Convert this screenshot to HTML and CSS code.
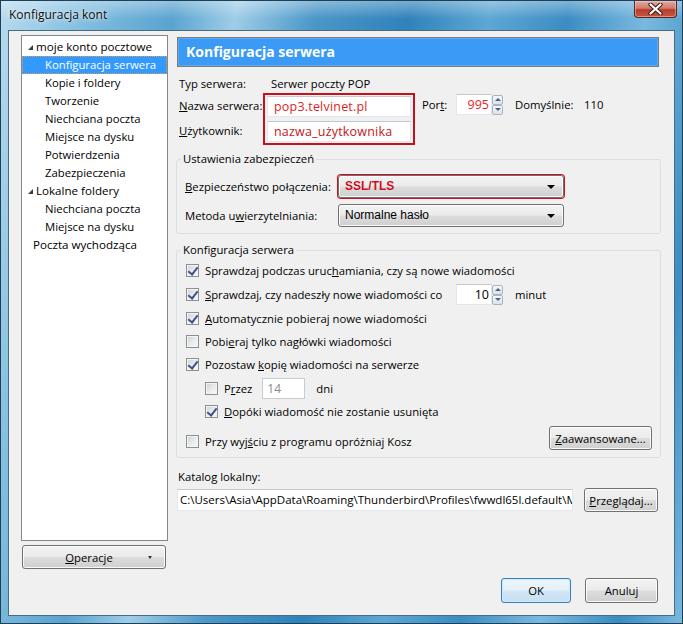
FILE: index.html
```html
<!DOCTYPE html>
<html lang="pl">
<head>
    <meta charset="UTF-8">
    <title>Konfiguracja kont</title>
    <link rel="stylesheet" href="styles.css">
</head>
<body>
    <div class="window">
        <div class="titlebar">
            <span class="title">Konfiguracja kont</span>
            <span class="close">
                <svg width="17" height="12" viewBox="0 0 17 12">
                    <path d="M3.5 1.5 L13.5 10.5 M13.5 1.5 L3.5 10.5" stroke="#3a1a16" stroke-width="4.2" stroke-linecap="round"/>
                    <path d="M3.5 1.5 L13.5 10.5 M13.5 1.5 L3.5 10.5" stroke="#fff" stroke-width="2.2" stroke-linecap="round"/>
                </svg>
            </span>
        </div>

        <div class="client">
            <div class="main">
                <div class="sidebar">
                    <ul class="tree">
                        <li class="parent"><span class="twisty"></span><span>moje konto pocztowe</span></li>
                        <li class="child selected">Konfiguracja serwera</li>
                        <li class="child">Kopie i foldery</li>
                        <li class="child">Tworzenie</li>
                        <li class="child">Niechciana poczta</li>
                        <li class="child">Miejsce na dysku</li>
                        <li class="child">Potwierdzenia</li>
                        <li class="child">Zabezpieczenia</li>
                        <li class="parent"><span class="twisty"></span><span>Lokalne foldery</span></li>
                        <li class="child">Niechciana poczta</li>
                        <li class="child">Miejsce na dysku</li>
                        <li class="parent leaf">Poczta wychodząca</li>
                    </ul>
                    <button class="btn ops"><span><u>O</u>peracje</span><span class="caret"></span></button>
                </div>

                <div class="panel">
                    <div class="panel-head">Konfiguracja serwera</div>

                    <div class="type-row">
                        <span class="lbl">Typ serwera:</span>
                        <span>Serwer poczty POP</span>
                    </div>

                    <div class="server-row">
                        <div class="labels">
                            <span><u>N</u>azwa serwera:</span>
                            <span><u>U</u>żytkownik:</span>
                        </div>
                        <div class="redbox">
                            <div class="textbox red">pop3.telvinet.pl</div>
                            <div class="textbox red dark">nazwa_użytkownika</div>
                        </div>
                        <div class="port">
                            <span class="port-lbl">Por<u>t</u>:</span>
                            <div class="textbox num bright">995</div>
                            <div class="spin"><span class="up"></span><span class="down"></span></div>
                            <span class="default-lbl">Domyślnie:</span>
                            <span>110</span>
                        </div>
                    </div>

                    <fieldset class="group security">
                        <legend>Ustawienia zabezpieczeń</legend>
                        <div class="sec-row">
                            <span class="sec-lbl"><u>B</u>ezpieczeństwo połączenia:</span>
                            <div class="select alert"><span>SSL/TLS</span></div>
                        </div>
                        <div class="sec-row">
                            <span class="sec-lbl">Metoda u<u>w</u>ierzytelniania:</span>
                            <div class="select"><span>Normalne hasło</span></div>
                        </div>
                    </fieldset>

                    <fieldset class="group options">
                        <legend>Konfiguracja serwera</legend>
                        <div class="check-row"><span class="cb on"></span><span>Sprawdzaj podczas uruc<u>h</u>amiania, czy są nowe wiadomości</span></div>
                        <div class="check-row tall">
                            <span class="cb on"></span>
                            <span class="interval-lbl"><u>S</u>prawdzaj, czy nadeszły nowe wiadomości co</span>
                            <div class="textbox num">10</div>
                            <div class="spin"><span class="up"></span><span class="down"></span></div>
                            <span class="minutes">minut</span>
                        </div>
                        <div class="check-row"><span class="cb on"></span><span><u>A</u>utomatycznie pobieraj nowe wiadomości</span></div>
                        <div class="check-row"><span class="cb"></span><span>Pobi<u>e</u>raj tylko nagłówki wiadomości</span></div>
                        <div class="check-row"><span class="cb on"></span><span>Pozostaw <u>k</u>opię wiadomości na serwerze</span></div>
                        <div class="check-row nested days-row">
                            <span class="cb"></span>
                            <span>P<u>r</u>zez</span>
                            <div class="textbox days">14</div>
                            <span class="days-lbl">dni</span>
                        </div>
                        <div class="check-row nested"><span class="cb on"></span><span><u>D</u>opóki wiadomość nie zostanie usunięta</span></div>
                        <div class="last-row">
                            <span class="last-lbl"><span class="cb"></span><span>Przy wyj<u>ś</u>ciu z programu opróżniaj Kosz</span></span>
                            <button class="btn adv"><u>Z</u>aawansowane...</button>
                        </div>
                    </fieldset>

                    <div class="dir-lbl">Katalog lokalny:</div>
                    <div class="dir-row">
                        <div class="textbox path"><span>C:\Users\Asia\AppData\Roaming\Thunderbird\Profiles\fwwdl65l.default\M</span></div>
                        <button class="btn browse"><u>P</u>rzeglądaj...</button>
                    </div>
                </div>
            </div>

            <div class="footer">
                <button class="btn ok">OK</button>
                <button class="btn cancel">Anuluj</button>
            </div>
        </div>
    </div>
</body>
</html>
```

FILE: styles.css
```css
* {
    margin: 0;
    padding: 0;
    box-sizing: border-box;
}

body {
    font-family: 'Open Sans', 'Noto Sans', sans-serif;
    font-size: 11.3px;
    color: #000;
    background: #fff;
}

u {
    text-decoration: underline;
    text-underline-offset: 1px;
}

/* window frame */
.window {
    width: 683px;
    height: 624px;
    display: flex;
    flex-direction: column;
    border: 1px solid #1f3f55;
    padding: 0 7px 7px 7px;
    background:
        linear-gradient(to bottom, rgba(255,255,255,0.35), rgba(255,255,255,0) 18px),
        linear-gradient(100deg, #b7dbee 0%, #86c0e2 10%, #5aa3d0 22%, #9fcde8 30%, #4b97c8 40%, #2f82ba 52%, #5ea7d4 62%, #3c8dc3 72%, #7ab9df 82%, #3a8cc2 92%, #79b8de 100%);
}

.titlebar {
    height: 29px;
    display: flex;
    align-items: flex-start;
    justify-content: space-between;
}

.title {
    margin-top: 5px;
    margin-left: 1px;
    font-size: 12px;
    color: #0b0b0b;
    text-shadow: 0 0 6px rgba(255,255,255,0.9), 0 0 2px rgba(255,255,255,0.7);
}

.close {
    width: 43px;
    height: 17px;
    margin-right: -2px;
    display: flex;
    align-items: center;
    justify-content: center;
    border: 1px solid #5b2520;
    border-top: none;
    border-radius: 0 0 4px 4px;
    background: linear-gradient(to bottom, #e5a99f 0%, #d27a6c 45%, #b83c2b 55%, #c7573f 100%);
    box-shadow: inset 0 0 0 1px rgba(255,220,210,0.45);
}

/* client area */
.client {
    flex: 1;
    display: flex;
    flex-direction: column;
    border: 1px solid #4c6a80;
    background: #f0f0f0;
    padding: 4px 13px 12px 12px;
}

.main {
    flex: 1;
    display: flex;
    gap: 8px;
}

.sidebar {
    width: 147px;
    display: flex;
    flex-direction: column;
}

.tree {
    flex: 1;
    list-style: none;
    background: #fff;
    border: 1px solid #828790;
    padding-top: 2px;
}

.tree li {
    height: 18px;
    line-height: 18px;
    white-space: nowrap;
    display: flex;
    align-items: center;
}

.tree .parent {
    padding-left: 3px;
    font-size: 11.6px;
}

.tree .leaf {
    padding-left: 11px;
}

.tree .child {
    padding-left: 23px;
}

.tree .selected {
    background: #3399ff;
    color: #fff;
    outline: 1px dotted #d9a441;
    outline-offset: -1px;
}

.twisty {
    width: 0;
    height: 0;
    margin: 0 3px 0 3px;
    border-left: 5px solid transparent;
    border-bottom: 5px solid #3b3b3b;
}

/* buttons */
.btn {
    font-family: 'Open Sans', 'Noto Sans', sans-serif;
    font-size: 11.3px;
    color: #000;
    height: 24px;
    border: 1px solid #707070;
    border-radius: 3px;
    background: linear-gradient(to bottom, #f2f2f2 0%, #ebebeb 48%, #dddddd 52%, #cfcfcf 100%);
    box-shadow: inset 0 0 0 1px rgba(255,255,255,0.85);
}

.ops {
    margin-top: 4px;
    margin-left: 1px;
    width: 144px;
    display: flex;
    align-items: center;
    justify-content: center;
    padding-right: 10px;
    position: relative;
}

.ops .caret {
    position: absolute;
    right: 13px;
    top: 10px;
    border-left: 2px solid transparent;
    border-right: 2px solid transparent;
    border-top: 3px solid #333;
}

/* right panel */
.panel {
    flex: 1;
    display: flex;
    flex-direction: column;
}

.panel-head {
    height: 30px;
    margin: 2px 2px 0 1px;
    background: #3a9af5;
    border: 1px solid #7a7a7a;
    box-shadow: inset 0 0 0 1px #5aa9f2;
    color: #fff;
    font-weight: 700;
    font-size: 14px;
    line-height: 28px;
    padding-left: 8px;
}

.type-row {
    margin-top: 9px;
    height: 16px;
    line-height: 16px;
    display: flex;
    padding-left: 3px;
}

.type-row .lbl {
    width: 92px;
}

.server-row {
    margin-top: 1px;
    display: flex;
    padding-left: 3px;
}

.labels {
    width: 84px;
    display: flex;
    flex-direction: column;
    padding-top: 5px;
    gap: 9px;
}

.labels span {
    height: 16px;
    line-height: 16px;
}

.redbox {
    width: 152px;
    height: 52px;
    border: 2px solid #c8101c;
    padding: 1px 2px;
    display: flex;
    flex-direction: column;
    gap: 4px;
}

.textbox {
    height: 21px;
    line-height: 19px;
    background: #fff;
    border: 1px solid #e3e8ee;
    border-top-color: #c2c8d0;
    padding: 0 6px;
    white-space: nowrap;
    overflow: hidden;
}

.textbox.red {
    color: #dd1f26;
    font-size: 12.5px;
    letter-spacing: 0.2px;
}

.textbox.dark {
    color: #c4161c;
}

.port {
    display: flex;
    align-items: center;
    height: 21px;
    margin-top: 1px;
    margin-left: 7px;
}

.port-lbl {
    width: 34px;
}

.textbox.num {
    width: 36px;
    text-align: right;
    padding: 0 2px;
    font-size: 12.5px;
}

.textbox.bright {
    color: #f21c1c;
}

.spin {
    width: 11px;
    height: 20px;
    display: flex;
    flex-direction: column;
}

.spin span {
    flex: 1;
    display: flex;
    align-items: center;
    justify-content: center;
    border: 1px solid #aab4c2;
    border-radius: 2px;
    background: linear-gradient(to bottom, #f7f8fa, #dde2e9);
}

.spin .up::after {
    content: "";
    border-left: 3px solid transparent;
    border-right: 3px solid transparent;
    border-bottom: 3px solid #4b5f80;
}

.spin .down::after {
    content: "";
    border-left: 3px solid transparent;
    border-right: 3px solid transparent;
    border-top: 3px solid #4b5f80;
}

.default-lbl {
    margin-left: 12px;
    width: 69px;
}

/* group boxes */
.group {
    border: 1px solid #d5dfe5;
    border-radius: 3px;
    padding: 0 8px;
    min-width: 0;
}

.group legend {
    margin-left: -4px;
    padding: 0 2px;
    line-height: 14px;
}

.security {
    margin-top: 7px;
    padding-top: 6px;
    padding-bottom: 3px;
}

.sec-row {
    height: 29px;
    display: flex;
    align-items: center;
}

.sec-lbl {
    width: 153px;
}

.select {
    width: 226px;
    height: 23px;
    line-height: 21px;
    padding-left: 6px;
    border: 1px solid #707070;
    border-radius: 3px;
    background: linear-gradient(to bottom, #f2f2f2 0%, #ebebeb 48%, #dddddd 52%, #cfcfcf 100%);
    box-shadow: inset 0 0 0 1px rgba(255,255,255,0.85);
    font-family: 'Liberation Sans', Arial, sans-serif;
    font-size: 12px;
    display: flex;
    align-items: center;
    justify-content: space-between;
}

.select::after {
    content: "";
    margin-right: 8px;
    border-left: 4px solid transparent;
    border-right: 4px solid transparent;
    border-top: 4px solid #000;
}

.select.alert {
    color: #d0101e;
    font-weight: 700;
    box-shadow: 0 0 0 1px #d0101e, inset 0 0 0 1px rgba(255,255,255,0.85);
}

.options {
    margin-top: 9px;
    padding-top: 2px;
    padding-bottom: 7px;
}

.check-row {
    height: 23px;
    display: flex;
    align-items: center;
    padding-left: 1px;
}

.check-row.tall {
    height: 25px;
}

.check-row.nested {
    padding-left: 20px;
}

.check-row.days-row {
    height: 24px;
}

.cb {
    width: 13px;
    height: 13px;
    margin-right: 6px;
    flex-shrink: 0;
    position: relative;
    border: 1px solid #8e8f8f;
    background: linear-gradient(135deg, #cbcfd5 0%, #e8eaec 50%, #f8f8f8 100%);
    box-shadow: inset 0 0 0 1px #f4f4f4;
}

.cb.on::after {
    content: "";
    position: absolute;
    left: 3px;
    top: 0;
    width: 4px;
    height: 8px;
    border: solid #3f5189;
    border-width: 0 2px 2px 0;
    transform: rotate(38deg);
}

.interval-lbl {
    width: 251px;
}

.minutes {
    margin-left: 12px;
}

.textbox.days {
    width: 43px;
    height: 21px;
    margin-left: 10px;
    padding-left: 4px;
    border: 1px solid #c7ccd2;
    color: #8a8a8a;
    font-size: 12px;
}

.days-lbl {
    margin-left: 11px;
}

.last-row {
    height: 27px;
    display: flex;
    align-items: flex-end;
    justify-content: space-between;
    padding-left: 1px;
}

.last-lbl {
    display: flex;
    align-items: center;
    height: 16px;
    margin-bottom: 1px;
}

.adv {
    width: 103px;
}

.dir-lbl {
    margin-top: 11px;
    height: 16px;
    line-height: 16px;
    padding-left: 2px;
}

.dir-row {
    margin-top: 3px;
    display: flex;
    align-items: center;
    gap: 11px;
}

.textbox.path {
    width: 396px;
    height: 22px;
    line-height: 20px;
    margin-left: 1px;
    padding-left: 2px;
    font-size: 11.5px;
}

.browse {
    width: 74px;
}

/* dialog buttons */
.footer {
    margin-top: 9px;
    margin-right: 3px;
    display: flex;
    justify-content: flex-end;
    gap: 14px;
}

.footer .btn {
    height: 25px;
}

.ok {
    width: 70px;
    border-color: #3c7fb1;
    background: linear-gradient(to bottom, #eef6fb 0%, #e4f0f8 48%, #d3e7f4 52%, #c6dff0 100%);
    box-shadow: inset 0 0 0 1px rgba(200,235,255,0.9);
}

.cancel {
    width: 73px;
}
```
